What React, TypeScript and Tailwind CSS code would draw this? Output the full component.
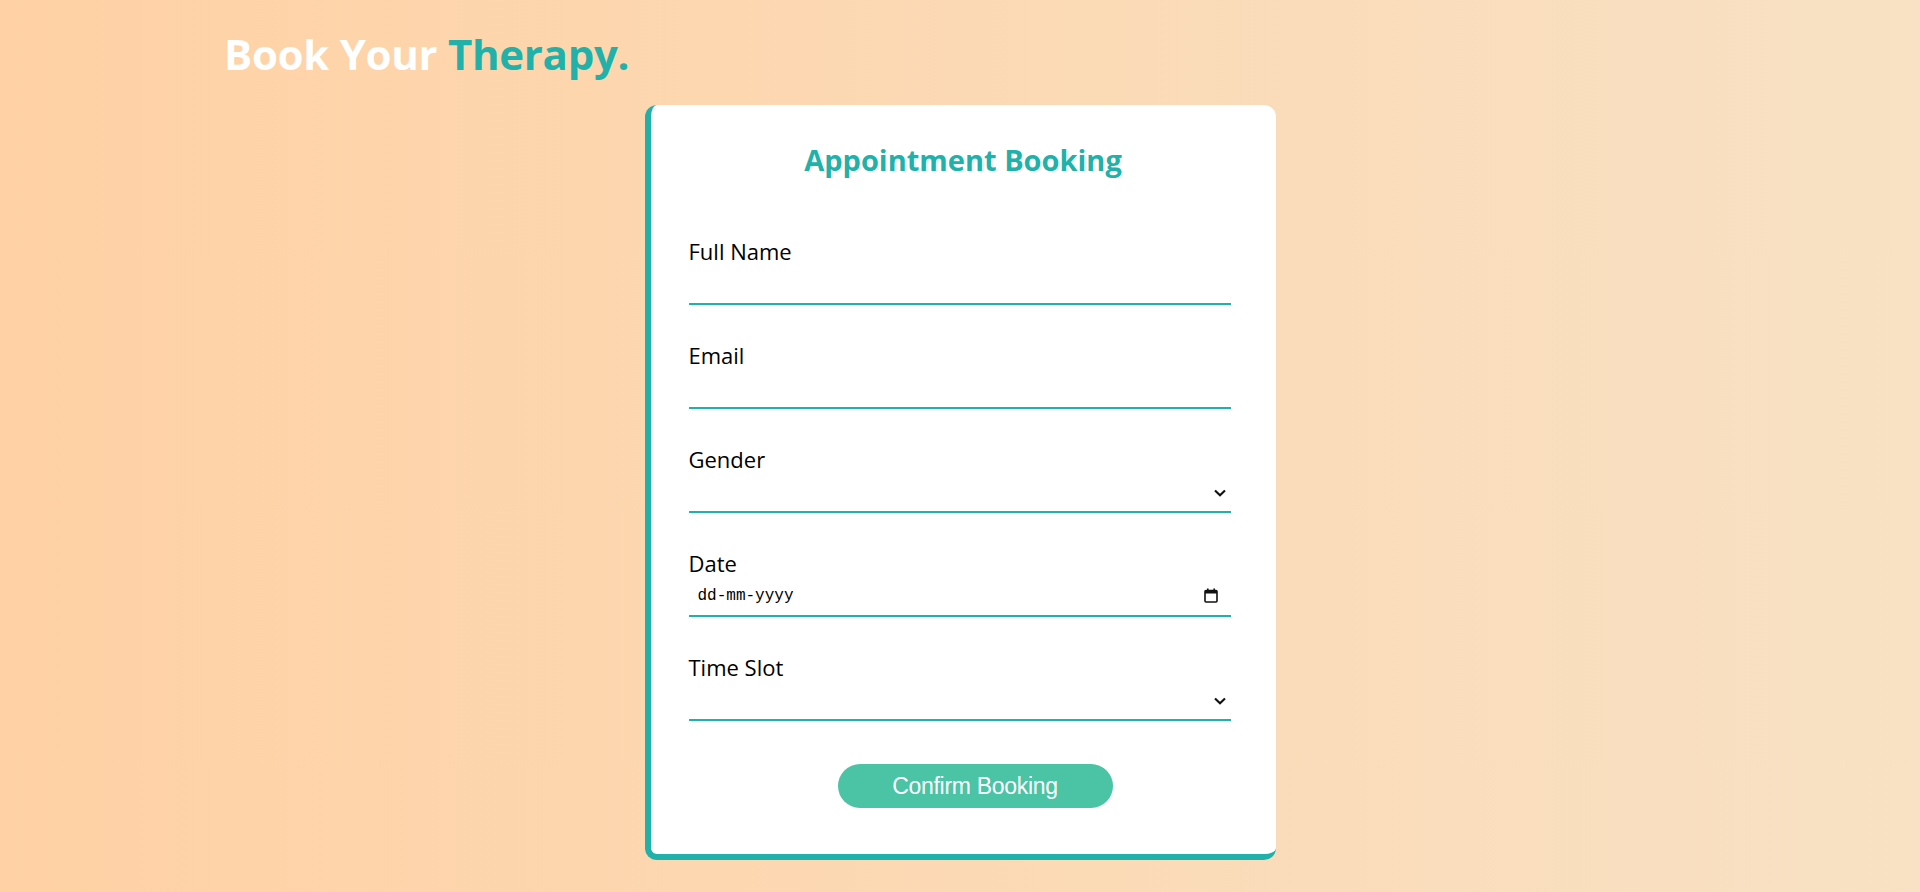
import React from 'react';

const fieldLabel = 'block text-[22px] leading-[28px] text-black';
const fieldLine = 'w-full h-[40px] border-b-2 border-[#20B2AA] bg-transparent outline-none';

const Chevron = () => (
  <svg width="12" height="8" viewBox="0 0 12 8" fill="none">
    <path d="M1 1.5 6 6.2 11 1.5" stroke="#111" strokeWidth="2.2" />
  </svg>
);

const CalendarIcon = () => (
  <svg width="14" height="15" viewBox="0 0 14 15" fill="none">
    <rect x="1" y="2.5" width="12" height="11.5" rx="1" stroke="#111" strokeWidth="1.6" />
    <rect x="1" y="2.5" width="12" height="3" fill="#111" />
    <rect x="3" y="0.5" width="1.6" height="3" fill="#111" />
    <rect x="9.4" y="0.5" width="1.6" height="3" fill="#111" />
  </svg>
);

const SelectField = ({ label, options }: { label: string; options: string[] }) => {
  const [value, setValue] = React.useState('');
  return (
    <div>
      <label className={fieldLabel}>{label}</label>
      <div className="relative">
        <select
          value={value}
          onChange={(e) => setValue(e.target.value)}
          className={`${fieldLine} appearance-none text-[16px] pl-[2px]`}
        >
          <option value=""></option>
          {options.map((o) => (
            <option key={o} value={o}>{o}</option>
          ))}
        </select>
        <span className="pointer-events-none absolute right-[5px] top-[16px]">
          <Chevron />
        </span>
      </div>
    </div>
  );
};

export default function App() {
  const [name, setName] = React.useState('');
  const [email, setEmail] = React.useState('');
  const [date, setDate] = React.useState('');

  return (
    <div
      className="min-h-screen w-full bg-gradient-to-r from-[#FFD1A4] to-[#F8E1C4] pb-[32px]"
      style={{ fontFamily: '"Open Sans", "Noto Sans", sans-serif' }}
    >
      <h1 className="pl-[224px] pt-[24px] text-[42px] leading-[60px] font-bold tracking-[-0.3px] text-white">
        Book Your <span className="text-[#20B2AA]">Therapy.</span>
      </h1>

      <div className="mx-auto mt-[21px] w-[631px] rounded-[12px] border-l-[6px] border-b-[6px] border-[#20B2AA] bg-white pt-[37px] pb-[46px] pl-[38px] pr-[45px]">
        <h2 className="text-center text-[29px] leading-[36px] font-bold text-[#20B2AA] pl-[7px]">
          Appointment Booking
        </h2>

        <form className="mt-[59px] flex flex-col gap-[36px]" onSubmit={(e) => e.preventDefault()}>
          <div>
            <label className={fieldLabel}>Full Name</label>
            <input
              type="text"
              value={name}
              onChange={(e) => setName(e.target.value)}
              className={`${fieldLine} text-[16px] px-[2px]`}
            />
          </div>
          <div>
            <label className={fieldLabel}>Email</label>
            <input
              type="email"
              value={email}
              onChange={(e) => setEmail(e.target.value)}
              className={`${fieldLine} text-[16px] px-[2px]`}
            />
          </div>
          <SelectField label="Gender" options={['Male', 'Female', 'Other']} />
          <div>
            <label className={fieldLabel}>Date</label>
            <div className="relative">
              <input
                type="text"
                value={date}
                onChange={(e) => setDate(e.target.value)}
                placeholder="dd-mm-yyyy"
                className={`${fieldLine} text-[16px] pl-[9px] placeholder:text-black`}
                style={{ fontFamily: '"Liberation Mono", "DejaVu Sans Mono", monospace' }}
              />
              <span className="pointer-events-none absolute right-[13px] top-[11px]">
                <CalendarIcon />
              </span>
            </div>
          </div>
          <SelectField label="Time Slot" options={['10:00 AM', '12:00 PM', '2:00 PM', '4:00 PM']} />

          <div className="mt-[7px] flex justify-center pl-[31px]">
            <button
              type="submit"
              className="h-[44px] w-[275px] rounded-full bg-[#4BC3A5] text-[23px] tracking-[-0.3px] text-white"
              style={{ fontFamily: '"Liberation Sans", Arial, sans-serif' }}
            >
              Confirm Booking
            </button>
          </div>
        </form>
      </div>
    </div>
  );
}
